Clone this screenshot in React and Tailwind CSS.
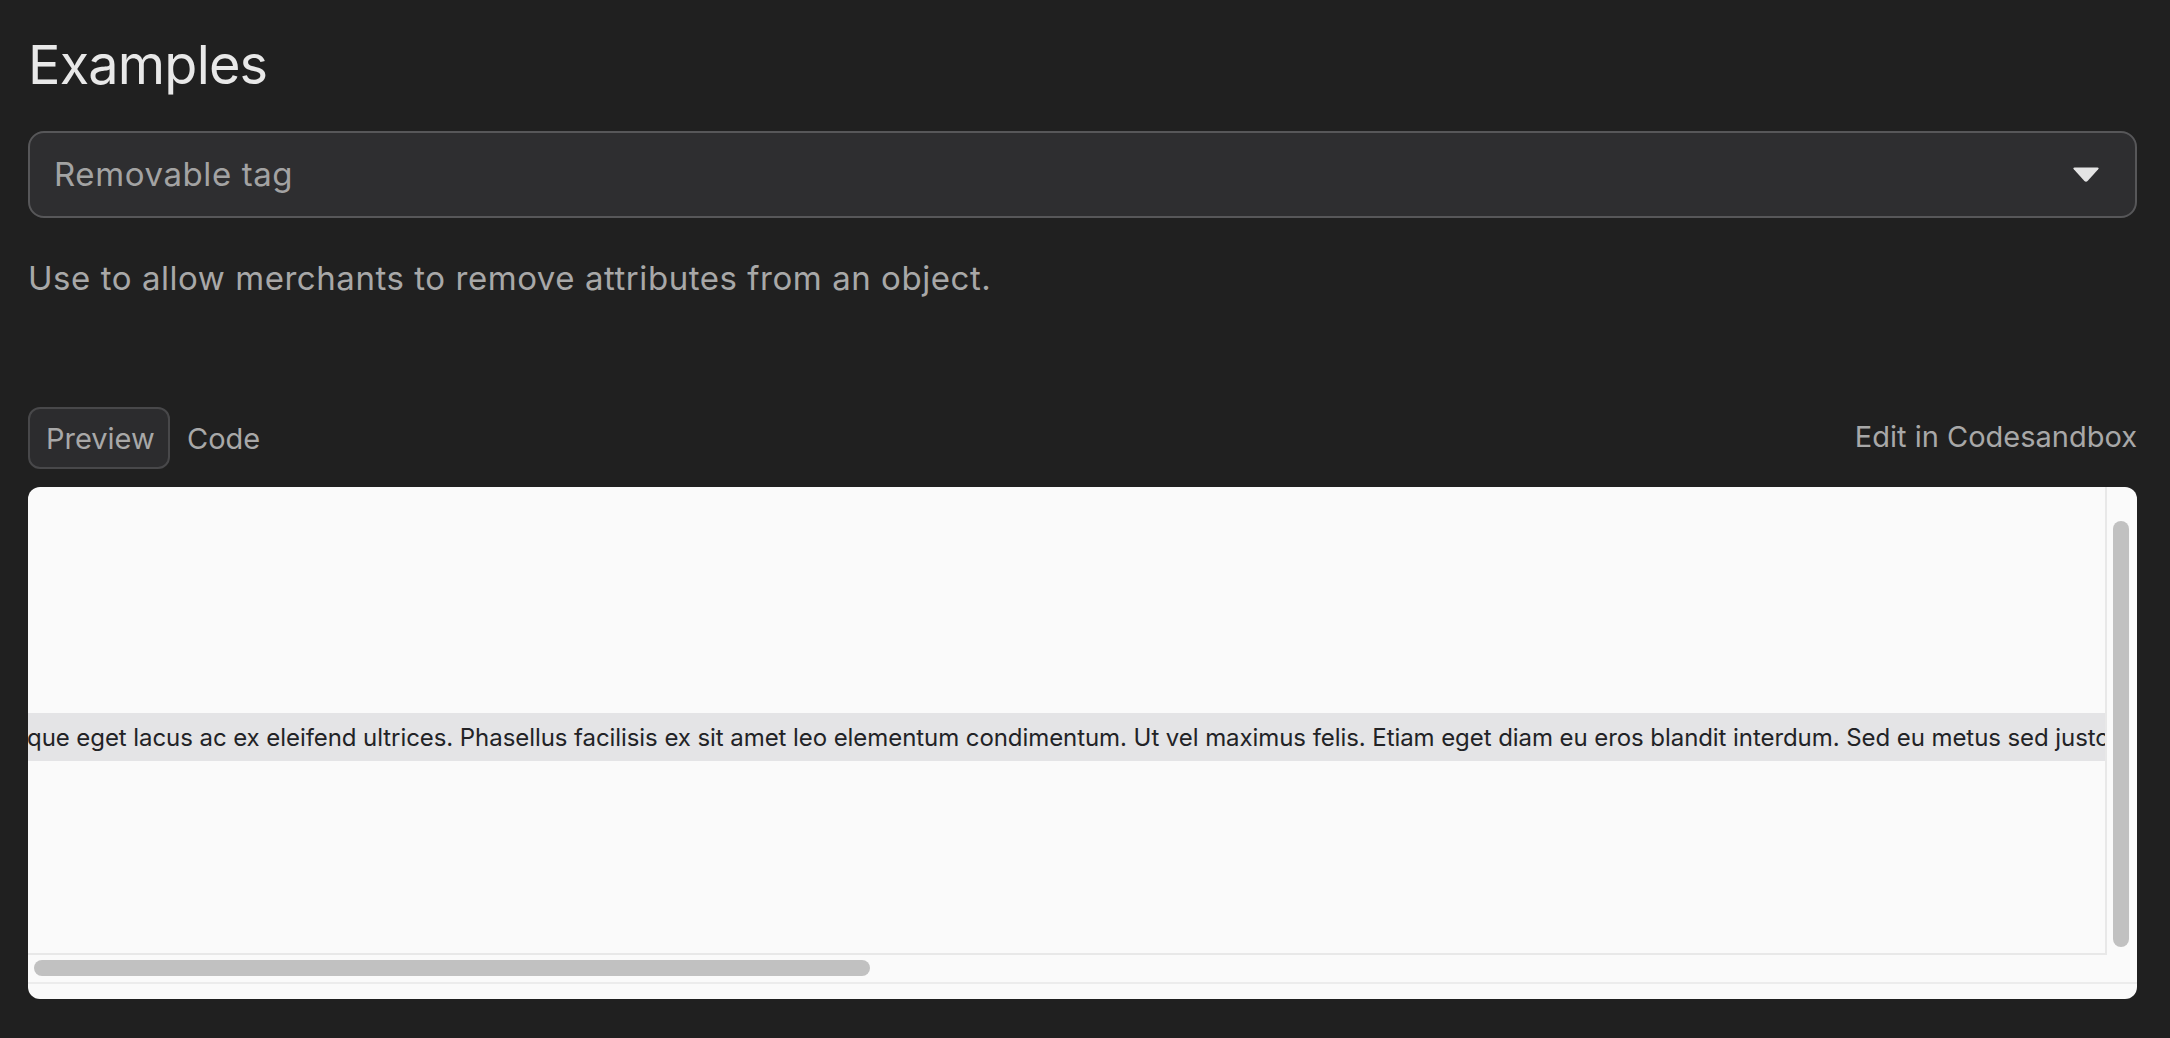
const FONT = { fontFamily: 'Inter, "Noto Sans", sans-serif' }

const SAMPLE =
  'que eget lacus ac ex eleifend ultrices. Phasellus facilisis ex sit amet leo elementum condimentum. Ut vel maximus felis. Etiam eget diam eu eros blandit interdum. Sed eu metus sed justo vehicula pretium. Nullam vitae ipsum at neque fringilla tincidunt.'

function Chevron() {
  return (
    <svg width="28" height="17" viewBox="0 0 28 17" aria-hidden="true">
      <path d="M2.5 1.5 H25.5 Q27.5 1.5 26.2 3.2 L15.6 15 Q14 16.6 12.4 15 L1.8 3.2 Q0.5 1.5 2.5 1.5 Z" fill="#e4e4e4" />
    </svg>
  )
}

// 미리보기 영역 (iframe 모양 + 스크롤바)
function PreviewFrame() {
  return (
    <div className="flex h-[512px] flex-col overflow-hidden rounded-[12px] bg-[#fafafa]">
      <div className="flex flex-1">
        <div className="flex min-w-0 flex-1 flex-col">
          <div className="flex h-[468px] flex-col overflow-hidden border-b-2 border-r-2 border-[#e8e8e8]">
            <div className="h-[226px]" />
            <div className="flex h-[48px] items-center overflow-hidden bg-[#e4e4e6]">
              <span className="-ml-[1px] mt-[2px] whitespace-nowrap text-[24px] tracking-[-0.07px] text-[#222326]">{SAMPLE}</span>
            </div>
          </div>
          <div className="flex h-[26px] items-center pl-[6px]">
            <div className="h-[16px] w-[836px] rounded-full bg-[#c1c1c1]" />
          </div>
        </div>
        <div className="w-[30px] pl-[6px] pt-[34px]">
          <div className="h-[426px] w-[16px] rounded-full bg-[#c1c1c1]" />
        </div>
      </div>
      <div className="h-[17px] border-t-2 border-[#ececec]" />
    </div>
  )
}

export default function App() {
  return (
    <div className="min-h-[1038px] bg-[#202020] pl-[28px] pr-[33px] pt-[38px]" style={FONT}>
      <h1 className="text-[54px] font-normal leading-none tracking-[-0.8px] text-[#e8e8e8]">Examples</h1>

      <div className="mt-[39px] flex h-[87px] items-center justify-between rounded-[16px] border-2 border-[#575759] bg-[#2e2e30] pl-[24px] pr-[35px]">
        <span className="text-[33px] leading-none tracking-[0.6px] text-[#a3a3a3]">Removable tag</span>
        <Chevron />
      </div>

      <p className="mt-[44px] text-[33px] leading-none tracking-[0.55px] text-[#a8a8a8]">
        Use to allow merchants to remove attributes from an object.
      </p>

      <div className="mt-[112px] flex items-center justify-between">
        <div className="flex items-center gap-[17px]">
          <button className="flex h-[62px] w-[142px] items-center rounded-[12px] border-2 border-[#48484a] bg-[#2c2c2e] pl-[16px] text-[29px] leading-none text-[#a8a8a8]">
            Preview
          </button>
          <button className="text-[29px] leading-none text-[#a8a8a8]">Code</button>
        </div>
        <a className="mb-[4px] text-[29px] leading-none text-[#a8a8a8]">Edit in Codesandbox</a>
      </div>

      <div className="mt-[18px]">
        <PreviewFrame />
      </div>
    </div>
  )
}
